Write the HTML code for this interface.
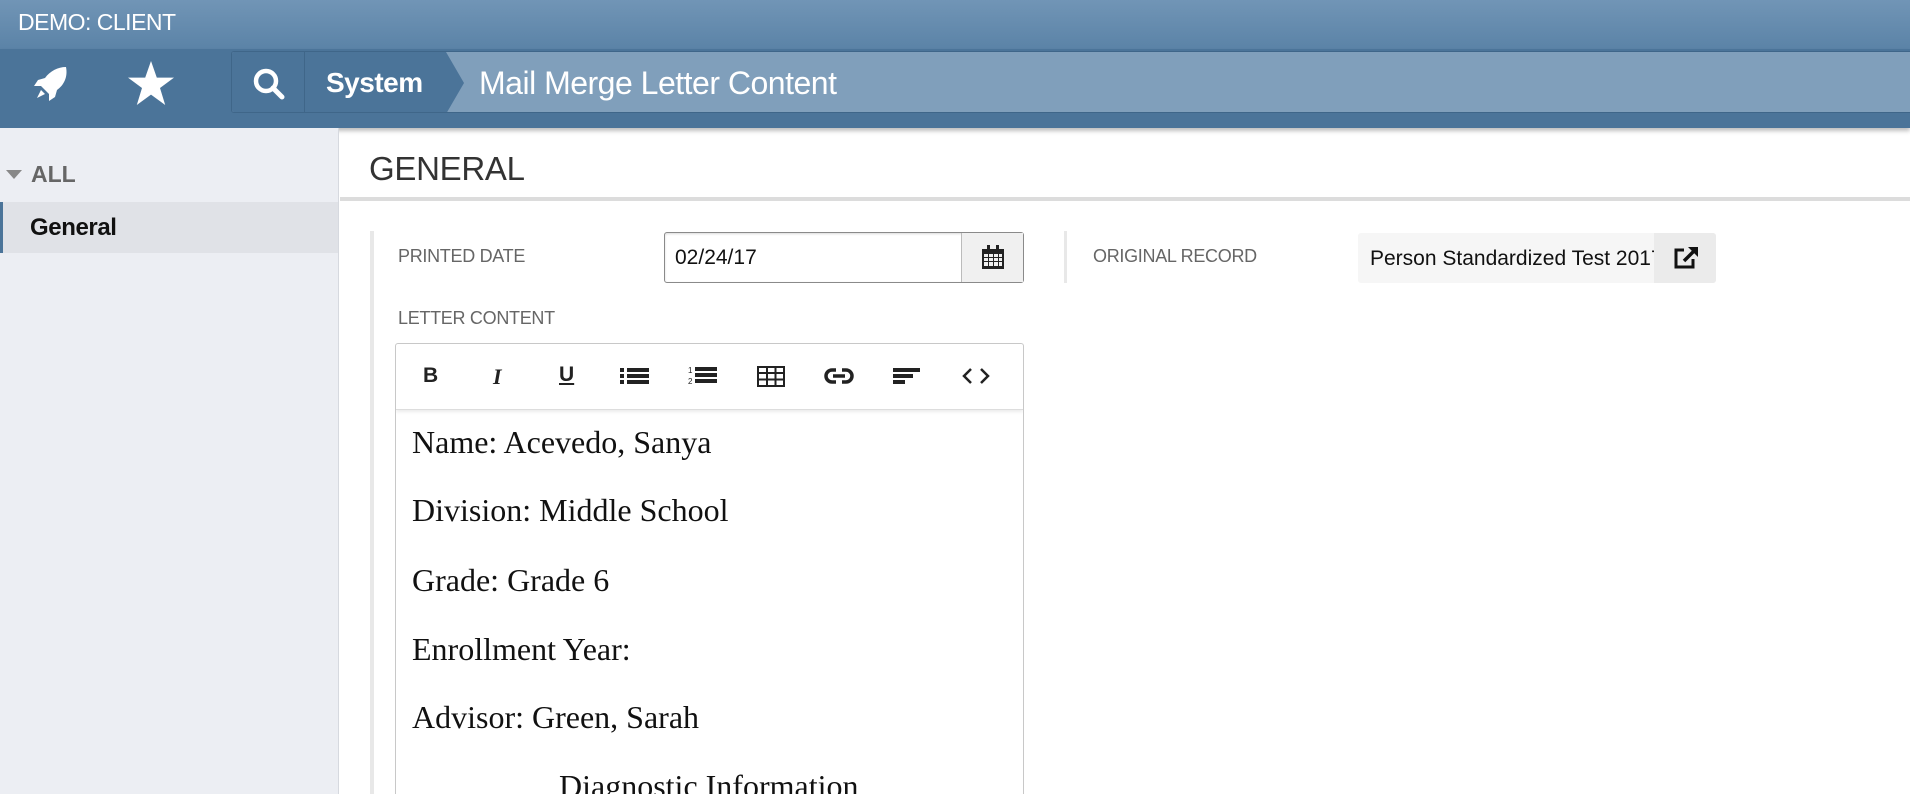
<!DOCTYPE html>
<html style="width:1910px;height:794px;overflow:hidden"><head><meta charset="utf-8"><style>
*{box-sizing:border-box;margin:0;padding:0}
body{width:1910px;height:794px;overflow:hidden;background:#fff;font-family:"Liberation Sans",sans-serif;position:relative}
.abs{position:absolute}
#top{left:0;top:0;width:1910px;height:49px;background:linear-gradient(#7195b6,#5b83a7);color:#fff;font-size:23px;padding:9px 0 0 18px;letter-spacing:-0.5px}
#nav{left:0;top:49px;width:1910px;height:79px;background:#4b7499;box-shadow:0 3px 4px rgba(0,0,0,.25)}
#crumb{left:231px;top:51px;width:1679px;height:62px;background:#809fbb;border:1px solid #3f6689;border-right:none;border-radius:3px 0 0 3px;overflow:hidden}
#sb{left:0;top:128px;width:339px;height:666px;background:#eceef3;border-right:1px solid #d6d9df}
.lbl{color:#666;font-size:18px;letter-spacing:-0.3px}
.line{position:absolute;left:16px;font-family:"Liberation Serif",serif;font-size:32px;color:#111;white-space:nowrap}
</style></head><body>
<div id="top" class="abs">DEMO: CLIENT</div>
<div id="nav" class="abs">
 <svg class="abs" style="left:32px;top:14px" width="40" height="40" viewBox="0 0 40 40"><path d="M34 4 C26 4 18 8 13 15 L6 17 L2 23 L9 23 L17 31 L17 38 L23 34 L25 27 C32 22 36 14 34 4Z M9 27 L5 35 L13 31Z" fill="#fff"/></svg>
 <svg class="abs" style="left:127px;top:12px" width="48" height="46" viewBox="0 0 24 23"><path d="M12 0 L14.9 8.3 L23.5 8.3 L16.5 13.5 L19.1 22 L12 16.8 L4.9 22 L7.5 13.5 L0.5 8.3 L9.1 8.3Z" fill="#fff"/></svg>
</div>
<div id="crumb" class="abs">
 <div class="abs" style="left:0;top:0;width:73px;height:62px;background:#4b7499;border-right:1px solid #3f6689"></div>
 <svg class="abs" style="left:20px;top:15px" width="34" height="34" viewBox="0 0 34 34"><circle cx="14" cy="14" r="10" fill="none" stroke="#fff" stroke-width="4.5"/><path d="M21 21 L30 30" stroke="#fff" stroke-width="5" stroke-linecap="round"/></svg>
 <svg class="abs" style="left:73px;top:0" width="160" height="62"><path d="M0 0 H141 L159 31 L141 62 H0Z" fill="#4b7499"/></svg>
 <div class="abs" style="left:94px;top:15px;color:#fff;font-size:28px;font-weight:bold;letter-spacing:-0.5px">System</div>
 <div class="abs" style="left:247px;top:13px;color:#fff;font-size:32px;letter-spacing:-0.5px">Mail Merge Letter Content</div>
</div>
<div id="sb" class="abs">
 <svg class="abs" style="left:6px;top:42px" width="16" height="10"><path d="M0 0H16L8 9Z" fill="#888"/></svg>
 <div class="abs" style="left:31px;top:33px;font-size:23px;font-weight:bold;color:#666">ALL</div>
 <div class="abs" style="left:0;top:74px;width:338px;height:51px;background:#e0e2e7;border-left:3px solid #4b7499"></div>
 <div class="abs" style="left:30px;top:86px;font-size:24px;font-weight:bold;color:#111;letter-spacing:-0.4px">General</div>
</div>
<div class="abs" style="left:369px;top:150px;font-size:33px;color:#333;letter-spacing:-0.3px">GENERAL</div>
<div class="abs" style="left:340px;top:197px;width:1570px;height:4px;background:#dcdcdc"></div>
<div class="abs" style="left:370px;top:231px;width:4px;height:563px;background:#e8e8e8"></div>
<div class="abs lbl" style="left:398px;top:246px">PRINTED DATE</div>
<div class="abs" style="left:664px;top:232px;width:360px;height:51px;border:1px solid #8a8a8a;border-radius:3px;background:#fff;box-shadow:inset 0 1px 2px rgba(0,0,0,.15)">
 <div class="abs" style="left:10px;top:13px;font-size:21px;color:#111">02/24/17</div>
 <div class="abs" style="left:296px;top:0;width:62px;height:49px;background:#f0f0f0;border-left:1px solid #bbb"></div>
 <svg class="abs" style="left:316px;top:12px" width="24" height="25" viewBox="0 0 24 25"><rect x="1" y="4" width="22" height="20" fill="#222"/><rect x="6" y="0" width="3" height="6" fill="#222"/><rect x="15" y="0" width="3" height="6" fill="#222"/><g fill="#f0f0f0"><rect x="3" y="9" width="4" height="3"/><rect x="8" y="9" width="4" height="3"/><rect x="13" y="9" width="4" height="3"/><rect x="18" y="9" width="3" height="3"/><rect x="3" y="13" width="4" height="3"/><rect x="8" y="13" width="4" height="3"/><rect x="13" y="13" width="4" height="3"/><rect x="18" y="13" width="3" height="3"/><rect x="3" y="17" width="4" height="4"/><rect x="8" y="17" width="4" height="4"/><rect x="13" y="17" width="4" height="4"/><rect x="18" y="17" width="3" height="4"/></g></svg>
</div>
<div class="abs" style="left:1064px;top:231px;width:3px;height:52px;background:#e8e8e8"></div>
<div class="abs lbl" style="left:1093px;top:246px">ORIGINAL RECORD</div>
<div class="abs" style="left:1358px;top:233px;width:358px;height:50px;background:#f6f6f6;border-radius:3px;overflow:hidden">
 <div class="abs" style="left:12px;top:14px;font-size:21px;color:#111;white-space:nowrap;width:284px;overflow:hidden">Person Standardized Test 2017</div>
 <div class="abs" style="left:296px;top:0;width:62px;height:50px;background:#ebebeb"></div>
 <svg class="abs" style="left:314px;top:12px" width="28" height="26" viewBox="0 0 28 26"><path d="M12 5H4V22H21V14" fill="none" stroke="#111" stroke-width="3"/><path d="M16 2H26V12Z" fill="#111"/><path d="M24 4L12 16" stroke="#111" stroke-width="3.5"/></svg>
</div>
<div class="abs lbl" style="left:398px;top:308px">LETTER CONTENT</div>
<div class="abs" style="left:395px;top:343px;width:629px;height:451px;border:1px solid #c8c8c8;border-bottom:none;border-radius:3px 3px 0 0;background:#fff;overflow:hidden">
 <div class="abs" style="left:0;top:0;width:627px;height:66px;border-bottom:1px solid #ddd;box-shadow:0 2px 3px rgba(0,0,0,.08)"></div>
 <div class="abs" style="left:27px;top:20px;font-size:21px;font-weight:bold;color:#222">B</div>
 <div class="abs" style="left:97px;top:20px;font-size:22px;font-weight:bold;font-style:italic;font-family:'Liberation Serif',serif;color:#222">I</div>
 <div class="abs" style="left:163px;top:19px;font-size:21px;font-weight:bold;color:#222;text-decoration:underline">U</div>
 <svg class="abs" style="left:224px;top:22px" width="30" height="20"><g fill="#222"><rect x="0" y="2" width="4" height="4"/><rect x="0" y="8" width="4" height="4"/><rect x="0" y="14" width="4" height="4"/><rect x="7" y="2" width="22" height="4"/><rect x="7" y="8" width="22" height="4"/><rect x="7" y="14" width="22" height="4"/></g></svg>
 <svg class="abs" style="left:292px;top:20px" width="30" height="22"><text x="0" y="9" font-size="8" fill="#222" font-family="Liberation Sans">1</text><text x="0" y="20" font-size="8" fill="#222" font-family="Liberation Sans">2</text><g fill="#222"><rect x="7" y="3" width="22" height="4"/><rect x="7" y="9" width="22" height="4"/><rect x="7" y="15" width="22" height="4"/></g></svg>
 <svg class="abs" style="left:361px;top:22px" width="28" height="22" viewBox="0 0 28 22"><rect x="1" y="1" width="26" height="19" fill="none" stroke="#222" stroke-width="2"/><path d="M1 7H27M1 13.5H27M10 1V20M18.5 1V20" stroke="#222" stroke-width="2"/></svg>
 <svg class="abs" style="left:428px;top:23px" width="30" height="18" viewBox="0 0 30 18"><path d="M12 3H8a6 6 0 0 0 0 12h4M18 3h4a6 6 0 0 1 0 12h-4M9 9H21" fill="none" stroke="#222" stroke-width="3.5"/></svg>
 <svg class="abs" style="left:497px;top:23px" width="28" height="18"><g fill="#222"><rect x="0" y="1" width="27" height="4"/><rect x="0" y="7" width="20" height="4"/><rect x="0" y="13" width="12" height="4"/></g></svg>
 <svg class="abs" style="left:565px;top:23px" width="30" height="18" viewBox="0 0 30 18"><path d="M10 2L3 9L10 16M20 2L27 9L20 16" fill="none" stroke="#222" stroke-width="2.5"/></svg>
 <div class="line" style="top:80px">Name: Acevedo, Sanya</div>
 <div class="line" style="top:148px">Division: Middle School</div>
 <div class="line" style="top:218px">Grade: Grade 6</div>
 <div class="line" style="top:287px">Enrollment Year:</div>
 <div class="line" style="top:355px">Advisor: Green, Sarah</div>
 <div class="line" style="top:424px;left:163px">Diagnostic Information</div>
</div>
</body></html>
